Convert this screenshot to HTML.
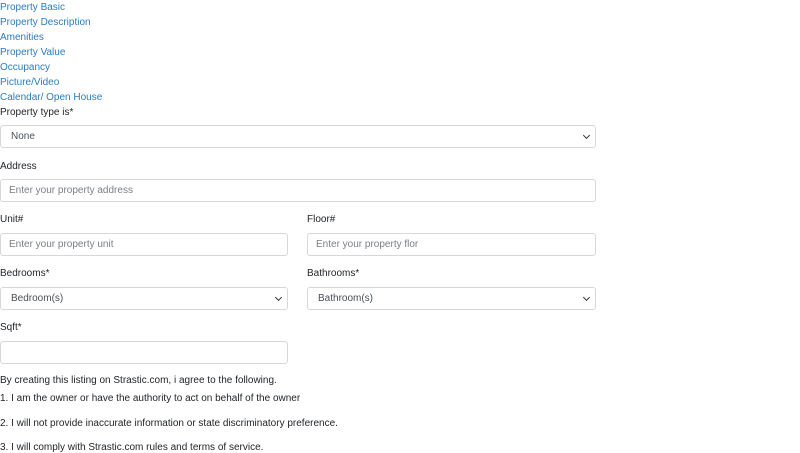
<!DOCTYPE html>
<html><head><meta charset="utf-8"><style>
*{box-sizing:border-box;margin:0;padding:0}
body{width:800px;height:450px;overflow:hidden;background:#fff;font-family:"Liberation Sans",sans-serif;font-size:10px;color:#212529;position:relative}
.a{position:absolute;left:0;white-space:nowrap}
.l{color:#2a7bc4}
.f{position:absolute;height:23px;border:1px solid #d6d9dc;border-radius:3px;background:#fff;padding-left:8px;line-height:22px;color:#495057}
.ph{color:#7a7f85}
.s::after{content:"";position:absolute;right:6px;top:7px;width:4px;height:4px;border-right:1.5px solid #333;border-bottom:1.5px solid #333;transform:rotate(45deg)}
.s{padding-left:10px}
</style></head><body>
<div class="a l" style="top:2px">Property Basic</div>
<div class="a l" style="top:17px">Property Description</div>
<div class="a l" style="top:32px">Amenities</div>
<div class="a l" style="top:47px">Property Value</div>
<div class="a l" style="top:62px">Occupancy</div>
<div class="a l" style="top:77px">Picture/Video</div>
<div class="a l" style="top:92px">Calendar/ Open House</div>
<div class="a" style="top:107px">Property type is*</div>
<div class="f s" style="left:0;top:125px;width:596px">None</div>
<div class="a" style="top:161px">Address</div>
<div class="f ph" style="left:0;top:179px;width:596px">Enter your property address</div>
<div class="a" style="top:214px">Unit#</div>
<div class="a" style="top:214px;left:307px">Floor#</div>
<div class="f ph" style="left:0;top:233px;width:288px">Enter your property unit</div>
<div class="f ph" style="left:307px;top:233px;width:289px">Enter your property flor</div>
<div class="a" style="top:268px">Bedrooms*</div>
<div class="a" style="top:268px;left:307px">Bathrooms*</div>
<div class="f s" style="left:0;top:287px;width:288px">Bedroom(s)</div>
<div class="f s" style="left:307px;top:287px;width:289px">Bathroom(s)</div>
<div class="a" style="top:322px">Sqft*</div>
<div class="f" style="left:0;top:341px;width:288px"></div>
<div class="a" style="top:375px">By creating this listing on Strastic.com, i agree to the following.</div>
<div class="a" style="top:393px">1. I am the owner or have the authority to act on behalf of the owner</div>
<div class="a" style="top:418px">2. I will not provide inaccurate information or state discriminatory preference.</div>
<div class="a" style="top:442px">3. I will comply with Strastic.com rules and terms of service.</div>
</body></html>
